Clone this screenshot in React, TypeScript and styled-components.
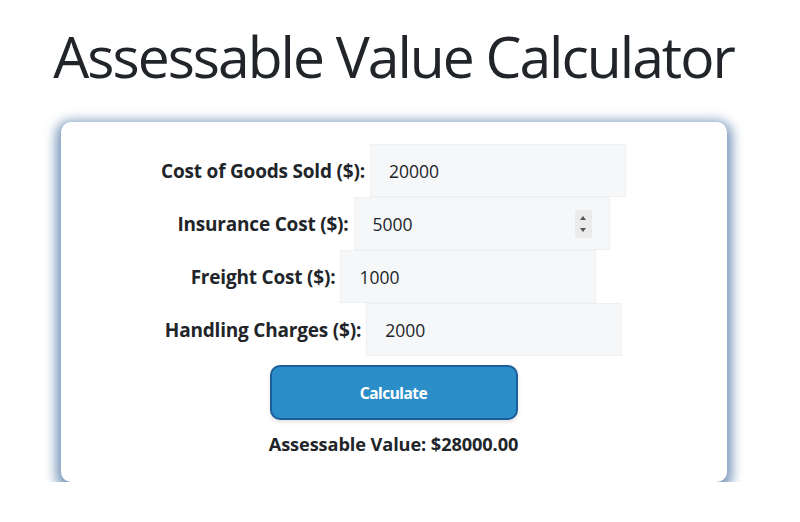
import React, { useState } from 'react';
import styled, { createGlobalStyle } from 'styled-components';

const GlobalStyle = createGlobalStyle`
  body {
    margin: 0;
    background: #ffffff;
    font-family: "Open Sans", "Noto Sans", sans-serif;
    color: #212529;
  }
`;

const Page = styled.div`
  width: 787px;
  display: flex;
  flex-flow: column;
  align-items: center;
`;

const Title = styled.h1`
  margin: 22px 0 0;
  font-size: 57px;
  font-weight: 400;
  line-height: 68px;
  letter-spacing: -2px;
  color: #212529;
`;

const Card = styled.div`
  margin-top: 32px;
  width: 666px;
  box-sizing: border-box;
  padding: 22px 0 26px;
  background: #ffffff;
  border-radius: 10px;
  box-shadow: 0 4px 12px 5px rgba(85, 125, 170, 0.8);
  display: flex;
  flex-flow: column;
  align-items: center;
`;

const Row = styled.div`
  display: flex;
  align-items: center;
  justify-content: center;
  gap: 5px;
`;

const Label = styled.label`
  font-weight: 700;
  font-size: 19px;
  letter-spacing: -0.2px;
  color: #212529;
`;

const InputWrap = styled.div`
  position: relative;
`;

const Input = styled.input`
  box-sizing: border-box;
  width: 256px;
  height: 53px;
  padding: 0 18px;
  font-family: inherit;
  font-size: 17.5px;
  color: #212529;
  background: #f6f7f8;
  border: 1px solid #eef0f2;
  border-radius: 0;
  outline: none;

  &::-webkit-inner-spin-button,
  &::-webkit-outer-spin-button {
    -webkit-appearance: none;
    margin: 0;
  }
`;

const Spinner = styled.div`
  position: absolute;
  right: 18px;
  top: 13px;
  width: 17px;
  height: 28px;
  background: #ebebeb;
  display: flex;
  flex-flow: column;
  align-items: center;
  justify-content: center;
  gap: 8px;
`;

const Arrow = styled.span<{ $down?: boolean }>`
  width: 0;
  height: 0;
  border-left: 3.5px solid transparent;
  border-right: 3.5px solid transparent;
  ${(p) => (p.$down ? 'border-top: 4px solid #555;' : 'border-bottom: 4px solid #555;')}
`;

const Button = styled.button`
  margin-top: 9px;
  width: 248px;
  height: 55px;
  background: #2b8ec8;
  border: 2px solid #1b5e9a;
  border-radius: 10px;
  color: #ffffff;
  font-family: "Noto Sans", "Open Sans", sans-serif;
  font-weight: 700;
  font-size: 15.5px;
  letter-spacing: -0.5px;
  cursor: pointer;
  box-shadow: 0 2px 4px rgba(0, 0, 0, 0.12);
`;

const Result = styled.p`
  margin: 12px 0 0;
  font-weight: 700;
  font-size: 18.2px;
  letter-spacing: -0.1px;
  color: #212529;
`;

const fields = [
  { label: 'Cost of Goods Sold ($):', value: '20000' },
  { label: 'Insurance Cost ($):', value: '5000', spinner: true },
  { label: 'Freight Cost ($):', value: '1000' },
  { label: 'Handling Charges ($):', value: '2000' },
];

const App = () => {
  const [values, setValues] = useState(fields.map((f) => f.value));
  const [result, setResult] = useState('28000.00');

  const calculate = () => {
    const total = values.reduce((sum, v) => sum + (parseFloat(v) || 0), 0);
    setResult(total.toFixed(2));
  };

  return (
    <>
      <GlobalStyle />
      <Page>
        <Title>Assessable Value Calculator</Title>
        <Card>
          {fields.map((f, i) => (
            <Row key={f.label}>
              <Label>{f.label}</Label>
              <InputWrap>
                <Input
                  type='number'
                  value={values[i]}
                  onChange={(e) => {
                    const next = [...values];
                    next[i] = e.target.value;
                    setValues(next);
                  }}
                />
                {f.spinner && (
                  <Spinner>
                    <Arrow />
                    <Arrow $down />
                  </Spinner>
                )}
              </InputWrap>
            </Row>
          ))}
          <Button onClick={calculate}>Calculate</Button>
          <Result>Assessable Value: ${result}</Result>
        </Card>
      </Page>
    </>
  );
};

export default App;
